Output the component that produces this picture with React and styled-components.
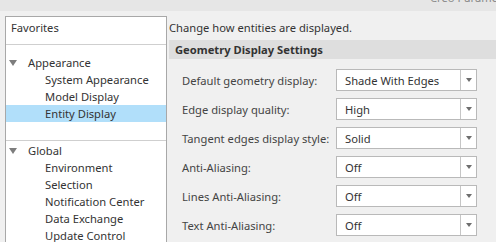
import React from "react";
import styled, { createGlobalStyle } from "styled-components";

const GlobalStyle = createGlobalStyle`
  html, body {
    margin: 0;
    padding: 0;
    width: 496px;
    height: 242px;
    overflow: hidden;
    background: #f0f0f0;
    font-family: "Segoe UI", "Noto Sans", "Liberation Sans", sans-serif;
    font-size: 11.2px;
    color: #333;
  }
`;

const Window = styled.div`
  display: flex;
  flex-direction: column;
  width: 496px;
  height: 242px;
`;

const TitleBar = styled.div`
  height: 11px;
  background: #e6e6e6;
  overflow: hidden;
  display: flex;
  padding-left: 430px;
`;

const TitleText = styled.span`
  margin-top: -11px;
  line-height: 17px;
  color: #8a8a8a;
  white-space: nowrap;
`;

const Main = styled.div`
  flex: 1;
  display: flex;
  padding: 5px 0 0 5px;
  min-height: 0;
`;

const Sidebar = styled.div`
  width: 160px;
  background: #fff;
  border: 1px solid #a8a8a8;
  border-bottom: none;
  padding-top: 2px;
`;

const TreeItem = styled.div`
  display: flex;
  align-items: center;
  height: 17px;
  padding-left: ${(p) => p.indent}px;
  background: ${(p) => (p.selected ? "#b1dffa" : "transparent")};
  color: #333;
  white-space: nowrap;
`;

const Divider = styled.div`
  height: 1px;
  background: #cfcfcf;
  margin: ${(p) => p.top}px 0 ${(p) => p.bottom}px;
`;

const Caret = styled.span`
  width: 0;
  height: 0;
  border-left: 4px solid transparent;
  border-right: 4px solid transparent;
  border-top: 6px solid #7d7d7d;
  margin: 1px 11px 0 3px;
`;

const Content = styled.div`
  flex: 1;
  display: flex;
  flex-direction: column;
  padding-left: 2px;
`;

const Intro = styled.div`
  height: 22px;
  display: flex;
  align-items: center;
  color: #333;
  margin-bottom: 2px;
`;

const SectionHeader = styled.div`
  height: 19px;
  display: flex;
  align-items: center;
  background: #dedede;
  padding-left: 6px;
  font-weight: bold;
  color: #333;
  margin-bottom: 10px;
`;

const Rows = styled.div`
  display: flex;
  flex-direction: column;
  gap: 7px;
  padding-left: 13px;
`;

const Row = styled.div`
  display: flex;
  align-items: center;
  height: 22px;
`;

const Label = styled.span`
  width: 154px;
  color: #444;
  white-space: nowrap;
`;

const Select = styled.div`
  width: 139px;
  height: 20px;
  display: flex;
  background: #fff;
  border: 1px solid #b9b9b9;
`;

const SelectValue = styled.span`
  flex: 1;
  display: flex;
  align-items: center;
  padding-left: 8px;
  color: #333;
`;

const SelectArrow = styled.span`
  width: 15px;
  border-left: 1px solid #c6c6c6;
  display: flex;
  align-items: center;
  justify-content: center;

  &::after {
    content: "";
    border-left: 3.5px solid transparent;
    border-right: 3.5px solid transparent;
    border-top: 4px solid #6e6e6e;
  }
`;

const settings = [
  ["Default geometry display:", "Shade With Edges"],
  ["Edge display quality:", "High"],
  ["Tangent edges display style:", "Solid"],
  ["Anti-Aliasing:", "Off"],
  ["Lines Anti-Aliasing:", "Off"],
  ["Text Anti-Aliasing:", "Off"],
];

export default function App() {
  return (
    <>
      <GlobalStyle />
      <Window>
        <TitleBar>
          <TitleText>Creo Parametric</TitleText>
        </TitleBar>
        <Main>
          <Sidebar>
            <TreeItem indent={5}>Favorites</TreeItem>
            <Divider top={8} bottom={9} />
            <TreeItem indent={0}>
              <Caret />
              Appearance
            </TreeItem>
            <TreeItem indent={39}>System Appearance</TreeItem>
            <TreeItem indent={39}>Model Display</TreeItem>
            <TreeItem indent={39} selected>
              Entity Display
            </TreeItem>
            <Divider top={18} bottom={1} />
            <TreeItem indent={0}>
              <Caret />
              Global
            </TreeItem>
            <TreeItem indent={39}>Environment</TreeItem>
            <TreeItem indent={39}>Selection</TreeItem>
            <TreeItem indent={39}>Notification Center</TreeItem>
            <TreeItem indent={39}>Data Exchange</TreeItem>
            <TreeItem indent={39}>Update Control</TreeItem>
          </Sidebar>
          <Content>
            <Intro>Change how entities are displayed.</Intro>
            <SectionHeader>Geometry Display Settings</SectionHeader>
            <Rows>
              {settings.map(([label, value]) => (
                <Row key={label}>
                  <Label>{label}</Label>
                  <Select>
                    <SelectValue>{value}</SelectValue>
                    <SelectArrow />
                  </Select>
                </Row>
              ))}
            </Rows>
          </Content>
        </Main>
      </Window>
    </>
  );
}
